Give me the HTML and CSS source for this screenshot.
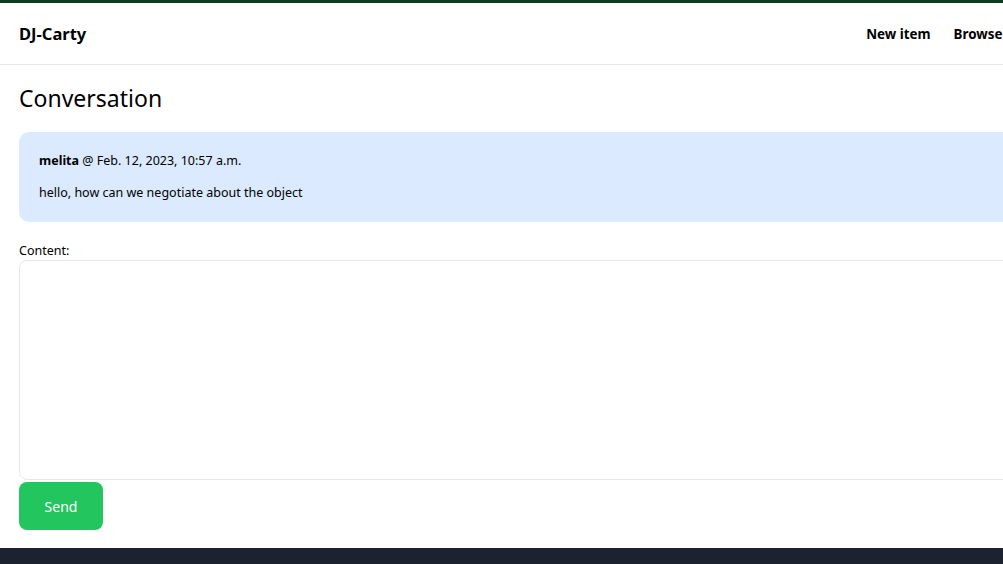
FILE: index.html
```html
<!DOCTYPE html>
<html>
<head>
<meta charset="utf-8">
<link rel="stylesheet" href="styles.css">
</head>
<body>
<div class="page">
  <nav class="nav">
    <a class="logo" href="#">DJ-Carty</a>
    <div class="links">
      <a href="#">New item</a>
      <a href="#">Browse</a>
      <a href="#">Inbox</a>
      <a href="#">Dashboard</a>
    </div>
  </nav>
  <main class="main">
    <h1 class="title">Conversation</h1>
    <div class="message">
      <p class="meta"><strong>melita</strong> @ Feb. 12, 2023, 10:57 a.m.</p>
      <p class="body">hello, how can we negotiate about the object</p>
    </div>
    <form class="form">
      <label class="label" for="content">Content:</label>
      <textarea id="content" class="textarea"></textarea>
      <button type="button" class="send">Send</button>
    </form>
  </main>
  <footer class="footer"></footer>
</div>
</body>
</html>
```
FILE: styles.css
```css
html, body {
  margin: 0;
  padding: 0;
  overflow: hidden;
  background: #ffffff;
}
body {
  font-family: "Noto Sans", "Open Sans", sans-serif;
  color: #000;
}
.page {
  width: 1178px;
  border-top: 3px solid #0b3d1f;
}
.nav {
  display: flex;
  align-items: center;
  height: 61px;
  padding: 0 19px;
  border-bottom: 1px solid #e5e7eb;
}
.nav a {
  color: #000;
  text-decoration: none;
  font-weight: 700;
}
.logo {
  font-size: 16.5px;
}
.links {
  margin-left: auto;
  display: flex;
  gap: 23px;
  font-size: 13.4px;
}
.main {
  padding: 0 19px;
}
.title {
  margin: 0;
  padding-top: 17px;
  font-size: 23px;
  font-weight: 400;
  line-height: 32px;
}
.message {
  margin-top: 18px;
  background: #dbeafe;
  border-radius: 10px;
  padding: 21px 20px 20px;
  height: 90px;
  box-sizing: border-box;
}
.message p {
  margin: 0;
  font-size: 12.5px;
  line-height: 16px;
}
.message .meta {
  margin-bottom: 16px;
}
.form {
  display: flex;
  flex-direction: column;
  align-items: flex-start;
  padding-top: 21px;
}
.label {
  font-size: 12.5px;
  line-height: 16px;
  margin-bottom: 1px;
}
.textarea {
  width: 100%;
  box-sizing: border-box;
  height: 220px;
  border: 1px solid #e5e7eb;
  border-radius: 8px;
  resize: none;
  font-family: inherit;
}
.send {
  margin-top: 2px;
  width: 84px;
  height: 48px;
  border: none;
  border-radius: 8px;
  background: #22c55e;
  color: #fff;
  font-family: inherit;
  font-size: 14px;
}
.footer {
  margin-top: 18px;
  height: 40px;
  background: #1c2230;
}
```
